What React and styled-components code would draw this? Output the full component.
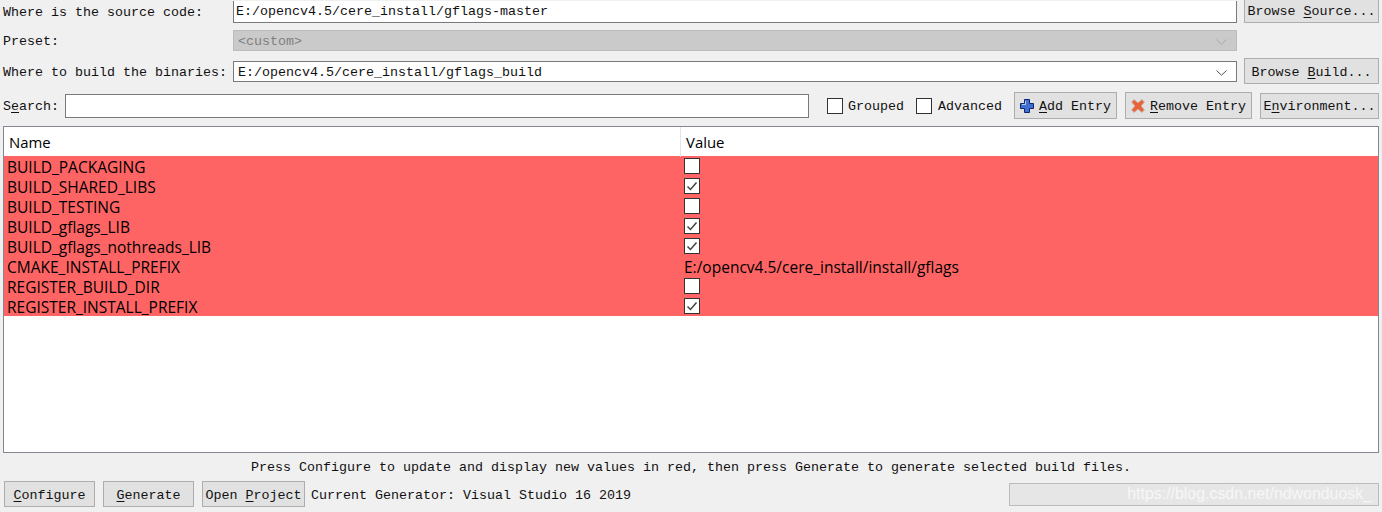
import React from "react";
import styled, { createGlobalStyle } from "styled-components";

const Global = createGlobalStyle`
  html, body { margin: 0; padding: 0; background: #f0f0f0; overflow: hidden; }
  u { text-underline-offset: 2px; }
`;
const mono = `"Liberation Mono", "DejaVu Sans Mono", monospace`;
const Page = styled.div`
  width: 1382px; height: 512px; box-sizing: border-box; padding: 0 3px;
  display: flex; flex-direction: column; background: #f0f0f0; overflow: hidden;
  font: 13.33px/16px ${mono}; color: #111;
`;
const Row = styled.div`
  display: flex; align-items: center; flex: none;
  height: ${p => p.$h}px; margin-top: ${p => p.$top || 0}px;
  --nudge: ${p => p.$nudge || 2}px;
`;
const Label = styled.label`
  width: ${p => p.$w || 230}px; flex: none; white-space: pre; padding-top: var(--nudge);
`;
const Field = styled.div`
  width: ${p => p.$w || 1004}px; height: ${p => p.$h || 21}px; flex: none; box-sizing: border-box;
  border: 1px solid ${p => p.$disabled ? "#bcbcbc" : "#7a7a7a"};
  border-top-width: ${p => p.$cut ? 0 : 1}px;
  background: ${p => p.$disabled ? "#cacaca" : "#fff"};
  color: ${p => p.$disabled ? "#808080" : "#111"};
  display: flex; align-items: center; justify-content: space-between;
  padding: var(--nudge) 9px 0 ${p => p.$pad ?? 2}px; white-space: pre;
`;
const Btn = styled.button`
  font: inherit; color: #111; flex: none; box-sizing: border-box; padding: var(--nudge) 0 0;
  width: ${p => p.$w}px; height: ${p => p.$h || 26}px;
  margin-left: ${p => p.$ml || 0}px;
  border: 1px solid #adadad; border-top-width: ${p => p.$cut ? 0 : 1}px;
  background: #e1e1e1;
  display: flex; align-items: center; justify-content: center; gap: 5px; white-space: pre;
`;
const Icon = styled.svg`
  width: 14px; height: 14px; flex: none; margin-top: -2px;
`;
const Check = styled.span`
  width: 16px; height: 16px; box-sizing: border-box; flex: none; display: block;
  border: 1px solid #333; background: #fff; margin-left: ${p => p.$ml || 0}px;
  svg { display: block; }
`;
const CheckText = styled.span`
  margin-left: ${p => p.$ml || 5}px; white-space: pre; padding-top: var(--nudge);
`;
const Table = styled.div`
  height: 327px; margin-top: 7px; flex: none; box-sizing: border-box;
  border: 1px solid #828790; background: #fff;
  font: 14.9px/20px "Open Sans", "Noto Sans", sans-serif; color: #000;
`;
const Head = styled.div`
  height: 29px; display: grid; grid-template-columns: 676px 1fr; background: #fff;
`;
const HeadCell = styled.div`
  padding-left: 5px; line-height: 30px;
  & + & { border-left: 1px solid #e5e5e5; }
`;
const DataRow = styled.div`
  height: 20px; display: grid; grid-template-columns: 680px 1fr; background: #ff6464; align-items: start;
  font-size: 15.5px;
`;
const Name = styled.div`
  padding-left: 3px; height: 20px; line-height: 22px; white-space: pre;
`;
const Value = styled.div`
  line-height: 22px; white-space: pre; height: 20px; display: flex; align-items: flex-start; padding-top: ${p => p.$check ? 2 : 0}px; box-sizing: border-box;
`;
const Message = styled.div`
  height: 28px; flex: none; display: flex; align-items: center; justify-content: center; white-space: pre; padding-top: 2px; box-sizing: border-box;
`;
const Footer = styled(Row)`
  padding-left: 1px;
`;
const Generator = styled.span`
  margin-left: 6px; white-space: pre; padding-top: var(--nudge);
`;
const Progress = styled.div`
  width: 370px; height: 23px; margin-left: auto; box-sizing: border-box;
  border: 1px solid #bcbcbc; background: #e6e6e6;
  display: flex; align-items: center; justify-content: flex-end; padding-right: 6px;
  font: 15.9px/20px "Liberation Sans", Arial, sans-serif; color: #f7f7f7; white-space: pre;
`;

const Chevron = ({ color }) => (
  <svg width="11" height="6" viewBox="0 0 11 6"><path d="M.5.5 5.5 5.2 10.5.5" fill="none" stroke={color} /></svg>
);
const Tick = () => (
  <svg width="14" height="14" viewBox="0 0 14 14"><path d="M2.5 7.5 5.5 10.5 11.5 3.5" fill="none" stroke="#444" strokeWidth="1.5" /></svg>
);
const Plus = () => (
  <Icon viewBox="0 0 14 14">
    <path d="M4.5.5h5v4h4v5h-4v4h-5v-4h-4v-5h4z" fill="#3f6fd0" stroke="#12246e" />
    <path d="M5.5 2v3.5H2" fill="none" stroke="#b9cdf5" />
  </Icon>
);
const Cross = () => (
  <Icon viewBox="0 0 14 14">
    <path d="M3 .6 7 3.8 11 .6 13.4 3 10.2 7 13.4 11 11 13.4 7 10.2 3 13.4.6 11 3.8 7 .6 3z" fill="#ea6238" stroke="#c9b3a6" strokeWidth="1" />
  </Icon>
);

const rows = [
  ["BUILD_PACKAGING", false],
  ["BUILD_SHARED_LIBS", true],
  ["BUILD_TESTING", false],
  ["BUILD_gflags_LIB", true],
  ["BUILD_gflags_nothreads_LIB", true],
  ["CMAKE_INSTALL_PREFIX", "E:/opencv4.5/cere_install/install/gflags"],
  ["REGISTER_BUILD_DIR", false],
  ["REGISTER_INSTALL_PREFIX", true],
];

export default function App() {
  return (
    <Page>
      <Global />
      <Row $h={23}>
        <Label>Where is the source code:</Label>
        <Field $cut $h={22}>E:/opencv4.5/cere_install/gflags-master</Field>
        <Btn $cut $w={135} $h={23} $ml={7}><span>Browse <u>S</u>ource...</span></Btn>
      </Row>
      <Row $h={21} $top={7}>
        <Label>Preset:</Label>
        <Field $disabled $pad={4}>{"<custom>"}<Chevron color="#a9a9a9" /></Field>
      </Row>
      <Row $h={26} $top={7} $nudge={4}>
        <Label>Where to build the binaries:</Label>
        <Field $pad={4}>E:/opencv4.5/cere_install/gflags_build<Chevron color="#555" /></Field>
        <Btn $w={135} $ml={7}><span>Browse <u>B</u>uild...</span></Btn>
      </Row>
      <Row $h={27} $top={8}>
        <Label $w={62}>S<u>e</u>arch:</Label>
        <Field $w={744} $h={24} />
        <Check $ml={18} />
        <CheckText>Grouped</CheckText>
        <Check $ml={12} />
        <CheckText $ml={6}>Advanced</CheckText>
        <Btn $w={103} $h={27} $ml={12}><Plus /><span><u>A</u>dd Entry</span></Btn>
        <Btn $w={127} $h={27} $ml={8}><Cross /><span><u>R</u>emove Entry</span></Btn>
        <Btn $w={119} $ml={8}><span>E<u>n</u>vironment...</span></Btn>
      </Row>
      <Table>
        <Head>
          <HeadCell>Name</HeadCell>
          <HeadCell>Value</HeadCell>
        </Head>
        {rows.map(([name, v]) => (
          <DataRow key={name}>
            <Name>{name}</Name>
            <Value $check={typeof v !== "string"}>
              {typeof v === "string" ? v : <Check>{v && <Tick />}</Check>}
            </Value>
          </DataRow>
        ))}
      </Table>
      <Message>Press Configure to update and display new values in red, then press Generate to generate selected build files.</Message>
      <Footer $h={26} $nudge={4}>
        <Btn $w={91}><span><u>C</u>onfigure</span></Btn>
        <Btn $w={91} $ml={8}><span><u>G</u>enerate</span></Btn>
        <Btn $w={103} $ml={8}><span>Open <u>P</u>roject</span></Btn>
        <Generator>Current Generator: Visual Studio 16 2019</Generator>
        <Progress>https://blog.csdn.net/ndwonduosk_</Progress>
      </Footer>
    </Page>
  );
}
